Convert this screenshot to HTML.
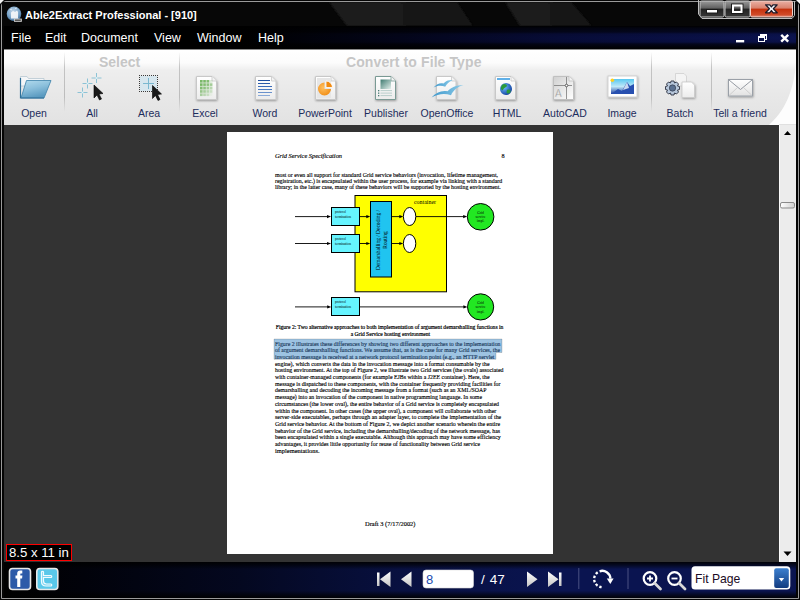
<!DOCTYPE html>
<html><head><meta charset="utf-8">
<style>
*{margin:0;padding:0;box-sizing:border-box}
html,body{width:800px;height:600px;overflow:hidden;background:#000}
body{position:relative;font-family:"Liberation Sans",sans-serif}
.a{position:absolute}
#frame{left:0;top:0;width:800px;height:600px;background:#050505;border-radius:6px 6px 0 0}
#frameline{left:1px;top:1px;width:798px;height:598px;border:1px solid #9a9a9a;border-radius:5px 5px 0 0}
#title{left:2px;top:2px;width:796px;height:24px;background:#070707}
#titletext{left:25px;top:9px;font:bold 11px "Liberation Sans",sans-serif;color:#fff;white-space:nowrap}
#menu{left:4px;top:26px;width:792px;height:23px;background:linear-gradient(90deg,#000 0%,#000 30%,#03051a 50%,#070c38 70%,#0b1350 100%)}
.mi{position:absolute;top:5px;font-size:12.5px;color:#fff;white-space:nowrap}
#toolbar{left:4px;top:49px;width:792px;height:76px}
.lbl{position:absolute;top:58px;font-size:10.5px;color:#1c2c5c;white-space:nowrap;transform:translateX(-50%)}
.sep{position:absolute;width:1px;background:linear-gradient(180deg,rgba(190,190,190,0) 0%,#c4c4c4 25%,#bcbcbc 75%,rgba(190,190,190,0) 100%)}
.grp{position:absolute;top:5px;font:bold 14px "Liberation Sans",sans-serif;color:#c6c6c6;white-space:nowrap}
#docarea{left:4px;top:125px;width:775px;height:437px;background:#333333}
#page{left:227px;top:132px;width:326px;height:422px;background:#fff}
#vscroll{left:779px;top:124px;width:17px;height:438px;background:#ececec}
#bottom{left:4px;top:562px;width:792px;height:36px;background:linear-gradient(90deg,#000 0%,#01020a 10%,#040820 30%,#081040 50%,#0a1450 70%,#0a1450 100%)}
.serif{font-family:"Liberation Serif",serif}
</style></head><body>
<div class="a" id="frame"></div>
<div class="a" id="frameline"></div>
<div class="a" id="title"></div>
<svg class="a" style="left:0;top:2px" width="800" height="24" viewBox="0 2 800 24">
  <defs><filter id="bl"><feGaussianBlur stdDeviation="1.2"/></filter>
  <linearGradient id="band" x1="0" y1="0" x2="1" y2="0"><stop offset="0" stop-color="#1e1e1e"/><stop offset="0.6" stop-color="#191919"/><stop offset="1" stop-color="#121212"/></linearGradient></defs>
  <g filter="url(#bl)">
  <path d="M329 2 H457 L473 26 H347 Z" fill="url(#band)"/>
  <path d="M505 2 H571 L592 26 H520 Z" fill="url(#band)"/>
  </g>
</svg>
<svg class="a" style="left:0;top:0" width="30" height="26">
  <path d="M0 0 H4 L0 4 Z" fill="#f0f0f0"/>
  <defs><radialGradient id="appg" cx="0.45" cy="0.35" r="0.7"><stop offset="0" stop-color="#c4d8ea"/><stop offset="0.6" stop-color="#7aa4c8"/><stop offset="1" stop-color="#3a6894"/></radialGradient></defs>
  <circle cx="14" cy="13.8" r="7.3" fill="url(#appg)"/>
  <path d="M11 12.5 L13 11 L15 12 L17 10.5 L18 12 V18.5 H11 Z" fill="#f4f6f8" opacity="0.92"/><path d="M9.5 9.5 L12 8.5 L11.5 10.5 Z M14.5 8 L17 7.8 L16 9.5 Z" fill="#eef4fa" opacity="0.8"/>
  <rect x="14" y="18.6" width="7.8" height="3.2" fill="#d8d8d8"/>
  <rect x="14.8" y="19.4" width="6" height="1.6" fill="#555"/>
</svg>
<div class="a" id="titletext">Able2Extract Professional - [910]</div>
<svg class="a" style="left:690px;top:0" width="110" height="26">
  <defs>
    <linearGradient id="gbtn" x1="0" y1="0" x2="0" y2="1">
      <stop offset="0" stop-color="#9a9a9a"/><stop offset="0.45" stop-color="#606060"/><stop offset="0.5" stop-color="#222"/><stop offset="1" stop-color="#363636"/>
    </linearGradient>
    <linearGradient id="rbtn" x1="0" y1="0" x2="0" y2="1">
      <stop offset="0" stop-color="#eab0a4"/><stop offset="0.45" stop-color="#d8806c"/><stop offset="0.5" stop-color="#c4300c"/><stop offset="0.85" stop-color="#d04a28"/><stop offset="1" stop-color="#e09080"/>
    </linearGradient>
  </defs>
  <path d="M8.5 0 V14 L12 18.5 H102 L104.5 15.5 V1" fill="none" stroke="#bdbdbd" stroke-width="1"/>
  <rect x="10" y="1" width="24" height="16" rx="1.5" fill="url(#gbtn)" stroke="#c8c8c8" stroke-width="1"/>
  <rect x="35" y="1" width="25" height="16" rx="1.5" fill="url(#gbtn)" stroke="#c8c8c8" stroke-width="1"/>
  <rect x="60.5" y="1" width="42" height="16" rx="1.5" fill="url(#rbtn)" stroke="#f0d0c8" stroke-width="1"/>
  <rect x="16.5" y="9.5" width="11" height="3.5" fill="#fff" stroke="#1a1a1a" stroke-width="1"/>
  <rect x="41.5" y="4" width="11.5" height="9.5" fill="none" stroke="#1a1a1a" stroke-width="1"/>
  <rect x="43" y="5.5" width="8.5" height="6.5" fill="none" stroke="#fff" stroke-width="2"/>
  <path d="M75.6 4.8 H79.8 L81.4 6.9 L83 4.8 H87.2 L83.4 8.8 L87.2 12.8 H83.2 L81.4 10.6 L79.6 12.8 H75.6 L79.4 8.8 Z" fill="#f2f4f8" stroke="#1e1a28" stroke-width="1.3" stroke-linejoin="round"/>
  
  <path d="M106 0 H110 V4 Z" fill="#f4f4f4"/>
</svg>
<div class="a" id="menu">
  <div class="a" style="left:0;top:0;width:792px;height:23px;background:linear-gradient(180deg,rgba(0,0,0,1) 0px,rgba(0,0,0,0.75) 2px,rgba(0,0,0,0.55) 6px,rgba(0,0,0,0.1) 8px,rgba(0,0,0,0) 12px,rgba(0,0,0,0.1) 16px,rgba(0,0,0,0.6) 18px,rgba(0,0,0,0.85) 21px,rgba(0,0,0,1) 23px)"></div>
  <span class="mi" style="left:7px">File</span>
  <span class="mi" style="left:41px">Edit</span>
  <span class="mi" style="left:77px">Document</span>
  <span class="mi" style="left:150px">View</span>
  <span class="mi" style="left:193px">Window</span>
  <span class="mi" style="left:254px">Help</span>
</div>
<svg class="a" style="left:730px;top:30px" width="66" height="18">
  <rect x="6" y="10" width="8.2" height="2.4" fill="#fff"/>
  <rect x="30.5" y="4.5" width="6" height="5" fill="none" stroke="#fff" stroke-width="1"/>
  <rect x="30" y="4" width="7" height="2" fill="#fff"/>
  <rect x="28.5" y="6.5" width="6" height="5" fill="#0a1248" stroke="#fff" stroke-width="1"/>
  <rect x="28" y="6" width="7" height="2" fill="#fff"/>
  <path d="M51.2 4.8 L58.2 11.6 M58.2 4.8 L51.2 11.6" stroke="#fff" stroke-width="2.4"/>
</svg>
<div class="a" id="toolbar">
  <svg class="a" style="left:0;top:0" width="792" height="76">
    <defs>
      <linearGradient id="tbg" x1="0" y1="0" x2="0" y2="1">
        <stop offset="0" stop-color="#ffffff"/><stop offset="0.18" stop-color="#fcfcfc"/><stop offset="0.28" stop-color="#eeeeee"/><stop offset="0.6" stop-color="#e8e8e8"/><stop offset="1" stop-color="#e2e2e2"/>
      </linearGradient>
    </defs>
    <rect x="0" y="0" width="792" height="76" fill="url(#tbg)"/>
    <rect x="0" y="0" width="792" height="1" fill="#8a8a8a"/>
    <rect x="0" y="1" width="792" height="2" fill="#fff"/>
    <path d="M792 15 C790 35 785 58 765 76 L792 76 Z" fill="#fdfdfd"/>
  </svg>
  <div class="grp" style="left:95px">Select</div>
  <div class="grp" style="left:342px;letter-spacing:0.1px">Convert to File Type</div>
  <div class="sep" style="left:60px;top:3px;height:60px"></div>
  <div class="sep" style="left:175px;top:3px;height:60px"></div>
  <div class="sep" style="left:647px;top:3px;height:60px"></div>
  <div class="sep" style="left:707px;top:3px;height:60px"></div>
  <span class="lbl" style="left:30px">Open</span>
  <span class="lbl" style="left:88px">All</span>
  <span class="lbl" style="left:145px">Area</span>
  <span class="lbl" style="left:201px">Excel</span>
  <span class="lbl" style="left:261px">Word</span>
  <span class="lbl" style="left:321px">PowerPoint</span>
  <span class="lbl" style="left:382px">Publisher</span>
  <span class="lbl" style="left:443px">OpenOffice</span>
  <span class="lbl" style="left:503px">HTML</span>
  <span class="lbl" style="left:561px">AutoCAD</span>
  <span class="lbl" style="left:618px">Image</span>
  <span class="lbl" style="left:676px">Batch</span>
  <span class="lbl" style="left:736px">Tell a friend</span>
</div>
<svg class="a" style="left:0;top:0" width="800" height="124">
  <defs>
    <linearGradient id="fold" x1="0" y1="0" x2="0.4" y2="1">
      <stop offset="0" stop-color="#b4dcee"/><stop offset="0.5" stop-color="#8cc0dc"/><stop offset="1" stop-color="#5a9ac0"/>
    </linearGradient>
    <linearGradient id="foldback" x1="0" y1="0" x2="0" y2="1">
      <stop offset="0" stop-color="#e8f0f4"/><stop offset="1" stop-color="#7eaac4"/>
    </linearGradient>
    <linearGradient id="doc" x1="0" y1="0" x2="0" y2="1">
      <stop offset="0" stop-color="#ffffff"/><stop offset="1" stop-color="#ececec"/>
    </linearGradient>
    <linearGradient id="xl" x1="0" y1="0" x2="1" y2="1">
      <stop offset="0" stop-color="#3e8a2c"/><stop offset="1" stop-color="#d8ecd0"/>
    </linearGradient>
    <linearGradient id="pub" x1="0" y1="0" x2="1" y2="1">
      <stop offset="0" stop-color="#3f7a70"/><stop offset="1" stop-color="#e4f0ec"/>
    </linearGradient>
    <radialGradient id="pie" cx="0.4" cy="0.4" r="0.7">
      <stop offset="0" stop-color="#ffc060"/><stop offset="1" stop-color="#f08a10"/>
    </radialGradient>
    <radialGradient id="globe" cx="0.35" cy="0.35" r="0.7">
      <stop offset="0" stop-color="#70c0ff"/><stop offset="1" stop-color="#1040a0"/>
    </radialGradient>
    <linearGradient id="sky" x1="0" y1="0" x2="0" y2="1">
      <stop offset="0" stop-color="#58c8f0"/><stop offset="0.5" stop-color="#bfe8f8"/><stop offset="1" stop-color="#2040a0"/>
    </linearGradient>
    <linearGradient id="acad" x1="0" y1="0" x2="1" y2="1">
      <stop offset="0" stop-color="#d0d0d0"/><stop offset="1" stop-color="#ffffff"/>
    </linearGradient>
    <linearGradient id="env" x1="0" y1="0" x2="0" y2="1">
      <stop offset="0" stop-color="#ffffff"/><stop offset="1" stop-color="#e2e2e2"/>
    </linearGradient>
    <pattern id="dots" x="0" y="0" width="2" height="2" patternUnits="userSpaceOnUse"><rect x="1" y="1" width="1" height="1" fill="#3a3a3a"/></pattern>
    <filter id="sh" x="-20%" y="-20%" width="150%" height="150%">
      <feDropShadow dx="0.5" dy="1" stdDeviation="0.8" flood-color="#000" flood-opacity="0.35"/>
    </filter>
  </defs>
  <!-- Open folder -->
  <path d="M20.5 76.5 H27 L28.5 78.5 H44 V86 H20.5 Z" fill="#f4f6f8" stroke="#b8c8d0" stroke-width="0.8"/>
  <path d="M21 98 L26.5 80.5 H51 L44 98 Z" fill="url(#fold)" stroke="#4a8ab0" stroke-width="0.9"/>
  <path d="M20.5 78 V98 H44" fill="none" stroke="#2e6f98" stroke-width="1.2"/>
  <!-- All sparkles -->
  <g stroke="#7cbcd2" stroke-width="1" opacity="0.85">
    <path d="M96.5 73 V83 M91.5 78 H101.5"/>
    <path d="M87.5 78.5 V88.5 M82.5 83.5 H92.5"/>
    <path d="M82.5 87.5 V97.5 M77.5 92.5 H87.5"/>
  </g>
  <g fill="#dff2f8"><circle cx="96.5" cy="78" r="1"/><circle cx="87.5" cy="83.5" r="1"/><circle cx="82.5" cy="92.5" r="1"/></g>
  <path d="M94 85 V98 L97 95 L99.5 100 L101.5 99 L99 94 L103 93.5 Z" fill="#1a1a1a" stroke="#000" stroke-width="0.6"/>
  <!-- Area -->
  <rect x="140" y="76" width="17" height="15" fill="#d6e6ee"/>
  <rect x="139" y="75" width="19" height="1" fill="url(#dots)"/>
  <rect x="139" y="91" width="19" height="1" fill="url(#dots)"/>
  <rect x="139" y="75" width="1" height="17" fill="url(#dots)"/>
  <rect x="157" y="75" width="1" height="17" fill="url(#dots)"/>
  <path d="M148.5 78 V89 M143 83.5 H154" stroke="#7ab8d0" stroke-width="1"/>
  <path d="M152.5 85.5 V98.5 L155.5 95.5 L158 100.5 L160 99.5 L157.5 94.5 L161.5 94 Z" fill="#1a1a1a" stroke="#000" stroke-width="0.6"/>
  <!-- Excel -->
  <g filter="url(#sh)"><path d="M196.5 76.5 H212 L216.5 81 V99.5 H196.5 Z" fill="url(#doc)" stroke="#c8c8c8" stroke-width="1"/></g>
  <path d="M212 76.5 V81 H216.5" fill="#f4f4f4" stroke="#c8c8c8" stroke-width="0.8"/>
  <g fill="url(#xl)">
    <rect x="200" y="80" width="12.5" height="16" opacity="0.25"/>
  </g>
  <g fill="#7ab868">
    <rect x="200" y="80" width="2.5" height="2.5"/><rect x="203.3" y="80" width="2.5" height="2.5"/><rect x="206.6" y="80" width="2.5" height="2.5" opacity="0.9"/>
    <rect x="200" y="83.4" width="2.5" height="2.5"/><rect x="203.3" y="83.4" width="2.5" height="2.5" opacity="0.9"/><rect x="206.6" y="83.4" width="2.5" height="2.5" opacity="0.8"/><rect x="209.9" y="83.4" width="2.5" height="2.5" opacity="0.6"/>
    <rect x="200" y="86.8" width="2.5" height="2.5" opacity="0.9"/><rect x="203.3" y="86.8" width="2.5" height="2.5" opacity="0.8"/><rect x="206.6" y="86.8" width="2.5" height="2.5" opacity="0.6"/><rect x="209.9" y="86.8" width="2.5" height="2.5" opacity="0.4"/>
    <rect x="200" y="90.2" width="2.5" height="2.5" opacity="0.7"/><rect x="203.3" y="90.2" width="2.5" height="2.5" opacity="0.55"/><rect x="206.6" y="90.2" width="2.5" height="2.5" opacity="0.4"/><rect x="209.9" y="90.2" width="2.5" height="2.5" opacity="0.25"/>
    <rect x="200" y="93.6" width="2.5" height="2.5" opacity="0.5"/><rect x="203.3" y="93.6" width="2.5" height="2.5" opacity="0.35"/><rect x="206.6" y="93.6" width="2.5" height="2.5" opacity="0.25"/>
  </g>
  <!-- Word -->
  <g filter="url(#sh)"><path d="M255.5 76.5 H271.5 L276 81 V99.5 H255.5 Z" fill="url(#doc)" stroke="#c8c8c8" stroke-width="1"/></g>
  <path d="M271.5 76.5 V81 H276" fill="#f4f4f4" stroke="#c8c8c8" stroke-width="0.8"/>
  <g stroke-width="1">
    <path d="M258 80.5 H270" stroke="#1e4e9e"/><path d="M258 83.5 H270" stroke="#2a5aa8"/>
    <path d="M258 86.5 H272" stroke="#3a6ab8"/><path d="M258 89.5 H272" stroke="#4a7ac0"/>
    <path d="M258 92.5 H272" stroke="#6a92cc"/><path d="M258 95.5 H270" stroke="#8aaad8"/>
  </g>
  <!-- PowerPoint -->
  <g filter="url(#sh)"><path d="M315.5 76.5 H331 L335.5 81 V99.5 H315.5 Z" fill="url(#doc)" stroke="#c8c8c8" stroke-width="1"/></g>
  <path d="M331 76.5 V81 H335.5" fill="#f4f4f4" stroke="#c8c8c8" stroke-width="0.8"/>
  <rect x="317" y="78" width="14" height="20" fill="#e6e6e6"/>
  <path d="M324.5 82.5 A6.5 6.5 0 1 0 331 89 H324.5 Z" fill="url(#pie)"/>
  <path d="M326 81 A6.5 6.5 0 0 1 332.5 87.5 H326 Z" fill="#f08a10" stroke="#fff" stroke-width="0.8"/>
  <!-- Publisher -->
  <g filter="url(#sh)"><path d="M375.5 76.5 H391 L395.5 81 V99.5 H375.5 Z" fill="url(#doc)" stroke="#7a9a94" stroke-width="1"/></g>
  <path d="M391 76.5 V81 H395.5" fill="#f4f4f4" stroke="#7a9a94" stroke-width="0.8"/>
  <rect x="380.5" y="79.5" width="10.5" height="9.5" fill="url(#pub)"/>
  <g fill="#4a7a74"><rect x="378" y="90" width="1.3" height="1.3"/><rect x="378" y="92.5" width="1.3" height="1.3"/><rect x="378" y="95" width="1.3" height="1.3"/></g>
  <g stroke="#a8c4c0" stroke-width="0.8"><path d="M380.5 90.6 H392"/><path d="M380.5 93.1 H392"/><path d="M380.5 95.6 H392"/></g>
  <!-- OpenOffice -->
  <g filter="url(#sh)"><path d="M436.5 76.5 H451.5 L456 81 V99.5 H436.5 Z" fill="url(#doc)" stroke="#c8c8c8" stroke-width="1"/></g>
  <path d="M451.5 76.5 V81 H456" fill="#f4f4f4" stroke="#c8c8c8" stroke-width="0.8"/>
  <defs><linearGradient id="gull" x1="0" y1="0" x2="1" y2="0"><stop offset="0" stop-color="#3e98cc"/><stop offset="1" stop-color="#8ccbe8"/></linearGradient></defs>
  <path d="M433.5 87.5 C437 83.5 440.5 82.5 443.5 83.5 C446 81 449 79.8 452.5 80.2 C449 81.8 446.8 84 445.2 86.8 C441.5 85.2 437.5 85.5 433.5 87.5 Z" fill="url(#gull)"/>
  <path d="M431.5 97.5 C436 92.5 441.5 90 447.5 91.2 C451 87.5 456 85.2 463.5 85 C457.5 86.8 453.5 90 451 95.2 C444.5 92.8 438 93.8 431.5 97.5 Z" fill="url(#gull)"/>
  <!-- HTML -->
  <g filter="url(#sh)"><path d="M495.5 76.5 H511 L515.5 81 V99.5 H495.5 Z" fill="url(#doc)" stroke="#c8c8c8" stroke-width="1"/></g>
  <path d="M511 76.5 V81 H515.5" fill="#f4f4f4" stroke="#c8c8c8" stroke-width="0.8"/>
  <rect x="497" y="78" width="13" height="2" fill="#60b0e8"/>
  <circle cx="506" cy="89" r="6" fill="url(#globe)"/>
  <path d="M502 85 C504 83 507 84 507 86 C506 88 504 87 503 90 C502 91 500.5 89 501 87 Z M507 90 C509 89 511 90 510.5 92 C509 94 507 94 506.5 92 Z" fill="#2a9a3a"/>
  <!-- AutoCAD -->
  <g filter="url(#sh)"><path d="M553.5 76.5 H569 L573.5 81 V99.5 H553.5 Z" fill="url(#acad)" stroke="#c0c0c0" stroke-width="1"/></g>
  <path d="M569 76.5 V81 H573.5" fill="#f4f4f4" stroke="#c0c0c0" stroke-width="0.8"/>
  <path d="M566.5 77 V99 M554 85.5 H572" stroke="#6a6a6a" stroke-width="0.7"/>
  <circle cx="566.5" cy="85.5" r="1.3" fill="#fff" stroke="#444" stroke-width="0.8"/>
  <text x="555" y="96.5" font-family="Liberation Sans" font-size="10" fill="#8a8a8a" stroke="#f0f0f0" stroke-width="0.3">A</text>
  <!-- Image -->
  <g filter="url(#sh)"><rect x="608" y="76" width="29" height="21" fill="#fff" stroke="#c8c8c8" stroke-width="0.8"/></g>
  <rect x="611" y="79" width="23" height="15" fill="url(#sky)"/>
  <path d="M611 94 L618 89 L622 91 L627 82 L630 86 L634 84 V94 Z" fill="#2850b0"/>
  <path d="M623 90 L627 82 L629 88 Z" fill="#c8d8f0"/>
  <circle cx="612.3" cy="80.3" r="1.8" fill="#ffd020"/>
  <!-- Batch -->
  <path d="M675.5 73.5 H684 L686.5 76 V86 H675.5 Z" fill="#f4f4f4" stroke="#cfcfcf" stroke-width="0.8"/>
  <g filter="url(#sh)"><path d="M682 82 H691.5 L694.5 85 V97.5 H682 Z" fill="url(#doc)" stroke="#c8c8c8" stroke-width="0.8"/></g>
  <g transform="translate(672.5 88)">
    <path d="M-1.5 -7 H1.5 L2 -5 L4 -6 L6 -4 L5 -2 L7 -1.5 V1.5 L5 2 L6 4 L4 6 L2 5 L1.5 7 H-1.5 L-2 5 L-4 6 L-6 4 L-5 2 L-7 1.5 V-1.5 L-5 -2 L-6 -4 L-4 -6 L-2 -5 Z" fill="#b8c8dc" stroke="#2a3040" stroke-width="0.9"/>
    <circle r="3.2" fill="#5a7090" stroke="#2a3040" stroke-width="0.6"/>
  </g>
  <!-- Envelope -->
  <g filter="url(#sh)"><rect x="728.5" y="79.5" width="24" height="16.5" fill="url(#env)" stroke="#9aa0a8" stroke-width="1"/></g>
  <path d="M729 80 L740.5 89.5 L752 80" fill="none" stroke="#8a9098" stroke-width="0.9"/>
  <path d="M729 95.5 L737 88 M752 95.5 L744 88" fill="none" stroke="#c8c8c8" stroke-width="0.8"/>
</svg>
<div class="a" id="docarea"></div>
<div class="a" id="page"></div>
<!--PAGECONTENT-->
<svg class="a" style="left:227px;top:132px" width="326" height="422" viewBox="227 132 326 422">
<g font-family="Liberation Serif" fill="#000" stroke="#000" stroke-width="0.15">
<text x="275" y="158" font-size="6.6" font-style="italic" textLength="67" lengthAdjust="spacingAndGlyphs">Grid Service Specification</text>
<text x="501.6" y="157.7" font-size="6.2">8</text>
<text transform="translate(275 177.2) scale(1 1.0)" font-size="7" textLength="223.0" lengthAdjust="spacingAndGlyphs">most or even all support for standard Grid service behaviors (invocation, lifetime management,</text>
<text transform="translate(275 183.3) scale(1 1.0)" font-size="7" textLength="227.2" lengthAdjust="spacingAndGlyphs">registration, etc.) is encapsulated within the user process, for example via linking with a standard</text>
<text transform="translate(275 189.3) scale(1 1.0)" font-size="7" textLength="225.8" lengthAdjust="spacingAndGlyphs">library; in the latter case, many of these behaviors will be supported by the hosting environment.</text>
<path d="M274 339 H502 V352.5 H496 V359.3 H274 Z" fill="#9dc3e2"/>
<text transform="translate(275 345.60) scale(1 1.0)" font-size="7" fill="#1c3a5c" stroke="#1c3a5c" textLength="225.5" lengthAdjust="spacingAndGlyphs">Figure 2 illustrates these differences by showing two different approaches to the implementation</text>
<text transform="translate(275 352.29) scale(1 1.0)" font-size="7" fill="#1c3a5c" stroke="#1c3a5c" textLength="225.0" lengthAdjust="spacingAndGlyphs">of argument demarshalling functions. We assume that, as is the case for many Grid services, the</text>
<text transform="translate(275 358.98) scale(1 1.0)" font-size="7" fill="#1c3a5c" stroke="#1c3a5c" textLength="219.5" lengthAdjust="spacingAndGlyphs">invocation message is received at a network protocol termination point (e.g., an HTTP servlet</text>
<text transform="translate(275 365.67) scale(1 1.0)" font-size="7" textLength="214.5" lengthAdjust="spacingAndGlyphs">engine), which converts the data in the invocation message into a format consumable by the</text>
<text transform="translate(275 372.36) scale(1 1.0)" font-size="7" textLength="228.5" lengthAdjust="spacingAndGlyphs">hosting environment. At the top of Figure 2, we illustrate two Grid services (the ovals) associated</text>
<text transform="translate(275 379.05) scale(1 1.0)" font-size="7" textLength="214.5" lengthAdjust="spacingAndGlyphs">with container-managed components (for example EJBs within a J2EE container). Here, the</text>
<text transform="translate(275 385.74) scale(1 1.0)" font-size="7" textLength="225.5" lengthAdjust="spacingAndGlyphs">message is dispatched to these components, with the container frequently providing facilities for</text>
<text transform="translate(275 392.43) scale(1 1.0)" font-size="7" textLength="211.5" lengthAdjust="spacingAndGlyphs">demarshalling and decoding the incoming message from a format (such as an XML/SOAP</text>
<text transform="translate(275 399.12) scale(1 1.0)" font-size="7" textLength="207.0" lengthAdjust="spacingAndGlyphs">message) into an invocation of the component in native programming language. In some</text>
<text transform="translate(275 405.81) scale(1 1.0)" font-size="7" textLength="224.0" lengthAdjust="spacingAndGlyphs">circumstances (the lower oval), the entire behavior of a Grid service is completely encapsulated</text>
<text transform="translate(275 412.50) scale(1 1.0)" font-size="7" textLength="221.3" lengthAdjust="spacingAndGlyphs">within the component. In other cases (the upper oval), a component will collaborate with other</text>
<text transform="translate(275 419.19) scale(1 1.0)" font-size="7" textLength="226.2" lengthAdjust="spacingAndGlyphs">server-side executables, perhaps through an adapter layer, to complete the implementation of the</text>
<text transform="translate(275 425.88) scale(1 1.0)" font-size="7" textLength="225.1" lengthAdjust="spacingAndGlyphs">Grid service behavior. At the bottom of Figure 2, we depict another scenario wherein the entire</text>
<text transform="translate(275 432.57) scale(1 1.0)" font-size="7" textLength="225.1" lengthAdjust="spacingAndGlyphs">behavior of the Grid service, including the demarshalling/decoding of the network message, has</text>
<text transform="translate(275 439.26) scale(1 1.0)" font-size="7" textLength="225.7" lengthAdjust="spacingAndGlyphs">been encapsulated within a single executable. Although this approach may have some efficiency</text>
<text transform="translate(275 445.95) scale(1 1.0)" font-size="7" textLength="205.0" lengthAdjust="spacingAndGlyphs">advantages, it provides little opportunity for reuse of functionality between Grid service</text>
<text transform="translate(275 452.64) scale(1 1.0)" font-size="7" textLength="44.5" lengthAdjust="spacingAndGlyphs">implementations.</text>
<text x="275.8" y="329.4" font-size="7" stroke="#000" stroke-width="0.22" textLength="227.6" lengthAdjust="spacingAndGlyphs">Figure 2: Two alternative approaches to both implementation of argument demarshalling functions in</text>
<text x="350.7" y="335.8" font-size="7" stroke="#000" stroke-width="0.22" textLength="79.3" lengthAdjust="spacingAndGlyphs">a Grid Service hosting environment</text>
<text x="365" y="526.3" font-size="6.4" textLength="50.5" lengthAdjust="spacingAndGlyphs">Draft 3 (7/17/2002)</text>
</g>
<rect x="355" y="195.5" width="91.5" height="96.3" fill="#ffff00" stroke="#000" stroke-width="1"/>
<rect x="370.5" y="201.5" width="21" height="75.5" fill="#20c4f0" stroke="#000" stroke-width="1"/>
<rect x="331.5" y="207.5" width="28" height="18" fill="#66f4ff" stroke="#000" stroke-width="1"/>
<ellipse cx="409.6" cy="216.5" rx="6.2" ry="9" fill="#fff" stroke="#000" stroke-width="1"/>
<rect x="331.5" y="234.5" width="28" height="18" fill="#66f4ff" stroke="#000" stroke-width="1"/>
<ellipse cx="409.6" cy="243.5" rx="6.2" ry="9" fill="#fff" stroke="#000" stroke-width="1"/>
<rect x="331.5" y="297.5" width="28" height="18" fill="#66f4ff" stroke="#000" stroke-width="1"/>
<circle cx="480.6" cy="216.8" r="13.3" fill="#22e822" stroke="#000" stroke-width="1"/>
<circle cx="480.6" cy="306.9" r="13.1" fill="#22e822" stroke="#000" stroke-width="1"/>
<path d="M295 216.6 H328" stroke="#000" stroke-width="0.9"/><path d="M331 216.6 L327 215.0 L327 218.2 Z" fill="#000"/>
<path d="M359.8 216.6 H367.3" stroke="#000" stroke-width="0.9"/><path d="M370.3 216.6 L366.3 215.0 L366.3 218.2 Z" fill="#000"/>
<path d="M391.7 216.6 H400.3" stroke="#000" stroke-width="0.9"/><path d="M403.3 216.6 L399.3 215.0 L399.3 218.2 Z" fill="#000"/>
<path d="M295 243.5 H328" stroke="#000" stroke-width="0.9"/><path d="M331 243.5 L327 241.9 L327 245.1 Z" fill="#000"/>
<path d="M359.8 243.5 H367.3" stroke="#000" stroke-width="0.9"/><path d="M370.3 243.5 L366.3 241.9 L366.3 245.1 Z" fill="#000"/>
<path d="M391.7 243.5 H400.3" stroke="#000" stroke-width="0.9"/><path d="M403.3 243.5 L399.3 241.9 L399.3 245.1 Z" fill="#000"/>
<path d="M416 216.6 H464.2" stroke="#000" stroke-width="0.9"/><path d="M467.2 216.6 L463.2 215.0 L463.2 218.2 Z" fill="#000"/>
<path d="M295 306.9 H328.2" stroke="#000" stroke-width="0.9"/><path d="M331.2 306.9 L327.2 305.29999999999995 L327.2 308.5 Z" fill="#000"/>
<path d="M359.8 306.9 H464.4" stroke="#000" stroke-width="0.9"/><path d="M467.4 306.9 L463.4 305.29999999999995 L463.4 308.5 Z" fill="#000"/>
<g font-family="Liberation Serif" fill="#000">
<text x="414" y="203.5" font-size="5.2" textLength="22" lengthAdjust="spacingAndGlyphs">container</text>
<text x="335" y="213.1" font-size="3.6" textLength="11" lengthAdjust="spacingAndGlyphs">protocol</text>
<text x="335" y="217.9" font-size="3.6" textLength="16" lengthAdjust="spacingAndGlyphs">termination</text>
<text x="335" y="240.1" font-size="3.6" textLength="11" lengthAdjust="spacingAndGlyphs">protocol</text>
<text x="335" y="244.9" font-size="3.6" textLength="16" lengthAdjust="spacingAndGlyphs">termination</text>
<text x="335" y="303.1" font-size="3.6" textLength="11" lengthAdjust="spacingAndGlyphs">protocol</text>
<text x="335" y="307.9" font-size="3.6" textLength="16" lengthAdjust="spacingAndGlyphs">termination</text>
<text x="480.6" y="213.60000000000002" font-size="3.6" text-anchor="middle">Grid</text>
<text x="480.6" y="218.0" font-size="3.6" text-anchor="middle">service</text>
<text x="480.6" y="222.4" font-size="3.6" text-anchor="middle">impl.</text>
<text x="480.6" y="303.7" font-size="3.6" text-anchor="middle">Grid</text>
<text x="480.6" y="308.09999999999997" font-size="3.6" text-anchor="middle">service</text>
<text x="480.6" y="312.5" font-size="3.6" text-anchor="middle">impl.</text>
<g transform="translate(380 240) rotate(-90)"><text x="0" y="0" font-size="5.4" text-anchor="middle" textLength="60" lengthAdjust="spacingAndGlyphs">Demarshalling / Decoding /</text><text x="0" y="7" font-size="5.4" text-anchor="middle">Routing</text></g>
</g>
</svg>
<!--/PAGECONTENT-->
<div class="a" id="vscroll"></div>
<svg class="a" style="left:779px;top:124px" width="17" height="437">
  <defs><linearGradient id="thumb" x1="0" y1="0" x2="1" y2="0"><stop offset="0" stop-color="#ffffff"/><stop offset="1" stop-color="#d0d0d0"/></linearGradient></defs>
  <rect x="0" y="0" width="1" height="437" fill="#fafafa"/>
  <rect x="0" y="0" width="17" height="1" fill="#e0e0e0"/>
  <path d="M5 11 L8.5 7 L12 11 Z" fill="#000"/>
  <rect x="1.5" y="78.5" width="14" height="5.5" rx="1.5" fill="url(#thumb)" stroke="#8a8a8a" stroke-width="1"/>
  <path d="M4.5 427.5 L8.5 432 L12.5 427.5 Z" fill="#000"/>
</svg>
<div class="a" style="left:6px;top:544px;width:66px;height:17px;border:1px solid #ff0000;background:#000"></div>
<div class="a" style="left:9px;top:545px;font-size:13.2px;color:#fff;white-space:nowrap;letter-spacing:0px">8.5 x 11 in</div>
<div class="a" id="bottom"></div>
<div class="a" style="left:4px;top:562px;width:792px;height:36px;background:linear-gradient(180deg,rgba(0,0,0,0.9) 0%,rgba(0,0,0,0.6) 8%,rgba(0,0,0,0) 20%,rgba(0,0,0,0) 80%,rgba(0,0,0,0.6) 92%,rgba(0,0,0,0.9) 100%)"></div>
<svg class="a" style="left:0;top:556px" width="800" height="44">
  <defs>
    <linearGradient id="tri" x1="0" y1="0" x2="0" y2="1"><stop offset="0" stop-color="#ffffff"/><stop offset="1" stop-color="#c4c4c4"/></linearGradient>
    <linearGradient id="ddb" x1="0" y1="0" x2="0" y2="1"><stop offset="0" stop-color="#3c80d0"/><stop offset="1" stop-color="#123c80"/></linearGradient>
  </defs>
  <!-- facebook -->
  <rect x="9.5" y="12.5" width="21" height="21" rx="3" fill="#2c5aa8" stroke="#e8e8e8" stroke-width="1.6"/>
  <path d="M17.2 31 V22.5 H15.5 V19.5 H17.2 V17.6 C17.2 15.6 18.3 14.6 20.2 14.6 H22.3 V17.4 H21 C20.4 17.4 20.3 17.7 20.3 18.2 V19.5 H22.4 L22.1 22.5 H20.3 V31 Z" fill="#fff"/>
  <!-- twitter -->
  <rect x="36.8" y="12.5" width="21" height="21" rx="3" fill="#5ac8ea" stroke="#e8e8e8" stroke-width="1.6"/>
  <path d="M41.5 16 C41.5 15 43.5 15 43.5 16 V19.5 H51 C52 19.5 52 21.5 51 21.5 H43.5 V25 C43.5 27 44.5 28 46.5 28 H51 C52 28 52 30 51 30 H46 C43 30 41.5 28.5 41.5 25.5 Z" fill="#7ed4f0" stroke="#f0fbff" stroke-width="1.2"/>
  <!-- nav -->
  <rect x="377" y="16.5" width="2.5" height="13.5" fill="url(#tri)"/>
  <path d="M380 23.3 L390.5 15.5 V31 Z" fill="url(#tri)"/>
  <path d="M401 23.3 L411.5 15.5 V31 Z" fill="url(#tri)"/>
  <rect x="423" y="14" width="50.5" height="18" rx="3" fill="#fff" stroke="#d8d8d8" stroke-width="0.6"/>
  <path d="M537.5 23.3 L527 15.5 V31 Z" fill="url(#tri)"/>
  <path d="M558.5 23.3 L548 15.5 V31 Z" fill="url(#tri)"/>
  <rect x="559" y="16.5" width="2.5" height="13.5" fill="url(#tri)"/>
  <!-- separators -->
  <rect x="578.3" y="12" width="1" height="21" fill="#5a6090" opacity="0.8"/>
  <rect x="627.5" y="12" width="1" height="21" fill="#5a6090" opacity="0.8"/>
  <!-- rotate -->
  <path d="M601.6 31.2 A8.2 8.2 0 0 1 598.9 15.6" fill="none" stroke="#fff" stroke-width="2.3" stroke-dasharray="2.4 1.9"/>
  <path d="M599.6 15.3 A8.2 8.2 0 0 1 610.4 22.6" fill="none" stroke="#fff" stroke-width="2.4"/>
  <path d="M606.8 22.6 L613.6 22.4 L610.3 28 Z" fill="#fff"/>
  <!-- zoom in -->
  <circle cx="650" cy="22.5" r="6.3" fill="none" stroke="#fff" stroke-width="2.2"/>
  <path d="M654.5 27 L660.5 33" stroke="#d8d8d8" stroke-width="2.8" stroke-linecap="round"/>
  <path d="M647 22.5 H653 M650 19.5 V25.5" stroke="#fff" stroke-width="1.8"/>
  <!-- zoom out -->
  <circle cx="674.5" cy="22.5" r="6.3" fill="none" stroke="#fff" stroke-width="2.2"/>
  <path d="M679 27 L685 33" stroke="#d8d8d8" stroke-width="2.8" stroke-linecap="round"/>
  <path d="M671.5 22.5 H677.5" stroke="#fff" stroke-width="1.8"/>
  <!-- fit page -->
  <rect x="691.5" y="10.2" width="98.8" height="23.3" rx="3.5" fill="#fff"/>
  <rect x="774.2" y="12.2" width="14.6" height="19.7" rx="2" fill="url(#ddb)"/>
  <path d="M778.8 22 H784.2 L781.5 25.5 Z" fill="#fff"/>
</svg>
<div class="a" style="left:426px;top:572px;font-size:13px;color:#1a4ab0">8</div>
<div class="a" style="left:481px;top:572px;font-size:13.5px;color:#fff;white-space:nowrap">/<span style="margin-left:5px">47</span></div>
<div class="a" style="left:695px;top:572px;font-size:12.2px;color:#1c0c24;white-space:nowrap">Fit Page</div>
</body></html>
